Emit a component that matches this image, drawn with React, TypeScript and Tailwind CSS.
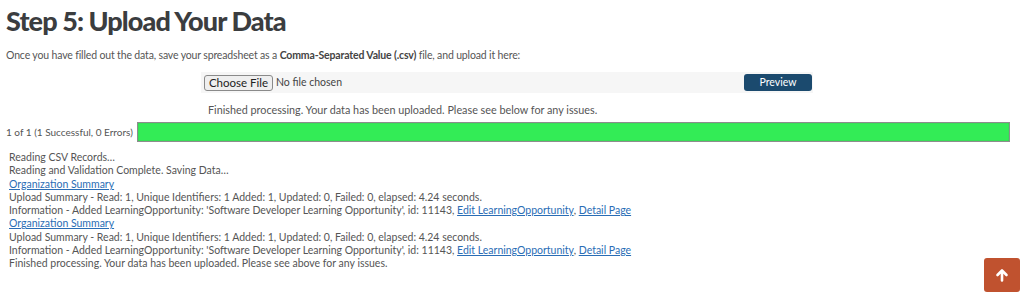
import React from 'react';

const LogLine: React.FC<{ children: React.ReactNode }> = ({ children }) => (
  <div className="h-[13.25px] leading-[13.25px] whitespace-nowrap">{children}</div>
);

const Link: React.FC<{ children: React.ReactNode }> = ({ children }) => (
  <a href="#" className="text-[#2a6db5] underline">{children}</a>
);

export default function App() {
  const summary = 'Upload Summary - Read: 1, Unique Identifiers: 1 Added: 1, Updated: 0, Failed: 0, elapsed: 4.24 seconds.';
  const info = (
    <>
      Information - Added LearningOpportunity: 'Software Developer Learning Opportunity', id: 11143, <Link>Edit LearningOpportunity</Link>, <Link>Detail Page</Link>
    </>
  );

  return (
    <div className="relative w-[1024px] h-[299px] bg-white overflow-hidden text-[#555]" style={{ fontFamily: 'Lato, "Noto Sans", sans-serif' }}>
      <div className="px-[6px] pt-[4px]">
        {/* 제목 */}
        <h1 className="text-[27px] leading-[34px] font-black text-[#3b3d3f] tracking-[-0.9px]">Step 5: Upload Your Data</h1>
        <p className="mt-[10px] text-[10.5px] leading-[14px] tracking-[-0.15px] whitespace-nowrap">
          Once you have filled out the data, save your spreadsheet as a <b className="text-[#444]">Comma-Separated Value (.csv)</b> file, and upload it here:
        </p>

        {/* 파일 선택 */}
        <div className="ml-[195px] mt-[10px] w-[612px] h-[21px] bg-[#f6f6f6] flex items-center pl-[3px] pr-[1px]">
          <span className="h-[16px] w-[69px] flex items-center justify-center border border-[#8a8a8a] rounded-[3px] bg-[#efefef] text-[11.5px] text-[#222] whitespace-nowrap">Choose File</span>
          <span className="ml-[3px] text-[10.5px] text-[#444]">No file chosen</span>
          <button className="ml-auto w-[68px] h-[17px] rounded-[3px] bg-[#1b4a6e] text-white text-[10.5px] leading-[17px]">Preview</button>
        </div>
        <p className="ml-[202px] mt-[10px] text-[10.8px] leading-[14px] whitespace-nowrap">Finished processing. Your data has been uploaded. Please see below for any issues.</p>

        {/* 진행 상태 */}
        <div className="mt-[5px] flex items-center">
          <span className="text-[10px] w-[131px] shrink-0 whitespace-nowrap">1 of 1 (1 Successful, 0 Errors)</span>
          <div className="w-[873px] h-[20px] bg-[#33ec56] border border-[#8d8d8d] shadow-[inset_0_0_1px_#666]" />
        </div>

        {/* 로그 */}
        <div className="mt-[9px] pl-[3px] text-[10.5px]">
          <LogLine>Reading CSV Records…</LogLine>
          <LogLine>Reading and Validation Complete. Saving Data…</LogLine>
          <LogLine><Link>Organization Summary</Link></LogLine>
          <LogLine>{summary}</LogLine>
          <LogLine>{info}</LogLine>
          <LogLine><Link>Organization Summary</Link></LogLine>
          <LogLine>{summary}</LogLine>
          <LogLine>{info}</LogLine>
          <LogLine>Finished processing. Your data has been uploaded. Please see above for any issues.</LogLine>
        </div>
      </div>

      {/* 맨 위로 버튼 */}
      <button className="absolute left-[984px] top-[258px] w-[36px] h-[34px] rounded-[3px] bg-[#c0522f] flex items-center justify-center">
        <svg width="14" height="14" viewBox="0 0 14 14" fill="none" stroke="white" strokeWidth="2.6" strokeLinecap="round" strokeLinejoin="round">
          <path d="M7 12.5V2.5M2.5 7L7 2.5L11.5 7" />
        </svg>
      </button>
    </div>
  );
}
